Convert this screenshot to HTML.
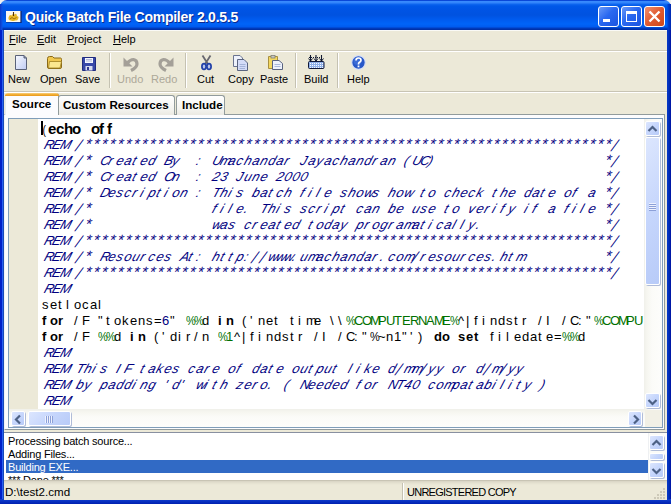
<!DOCTYPE html>
<html><head><meta charset="utf-8">
<style>
*{margin:0;padding:0;box-sizing:border-box}
html,body{width:671px;height:504px;overflow:hidden}
body{position:relative;background:#ece9d8;font-family:"Liberation Sans",sans-serif;font-size:11px;color:#000}
div,svg{position:absolute}
#code span{position:static}
#corner{left:0;top:0;width:671px;height:20px;background:#f0f0f0}
#title{left:0;top:0;width:671px;height:30px;border-radius:7px 7px 0 0;background:linear-gradient(#0a48d8 0px,#0a48d8 1px,#3a8cfe 1px,#3284fa 3px,#1068f0 4px,#0058e8 6px,#0054e4 10px,#0052e0 15px,#005cf0 20px,#0064f8 24px,#005cf0 26.5px,#0044cc 28px,#0030a8 29px,#0030a8 30px)}
#lb{left:0;top:30px;width:4px;height:474px;background:linear-gradient(90deg,#0020c8 0,#0020c8 2px,#2860f0 2px,#2860f0 3px,#1848b8 3px)}
#rb{left:667px;top:30px;width:4px;height:474px;background:linear-gradient(90deg,#0838c8,#0030b8 2px,#0010a0)}
#bb{left:0;top:499px;width:671px;height:5px;background:linear-gradient(#1040d0,#0020b0)}
.ttxt{left:25px;top:9px;font-weight:bold;font-size:14px;letter-spacing:-0.24px;line-height:16px;color:#fff;text-shadow:1px 1px 0 #0a2a90;white-space:pre}
.tbtn{top:6px;width:21px;height:21px;border:1px solid #fff;border-radius:3px;background:linear-gradient(135deg,#6a9af8,#2a68f0 45%,#1a54e0)}
.menu{font-size:11px;line-height:13px;white-space:pre;text-underline-offset:1px}
.hs{height:1px;left:4px;width:663px}
.tb{top:73px;font-size:11px;line-height:13px;white-space:pre}
.dis{color:#aca899}
.tsep{top:53px;width:2px;height:35px;border-left:1px solid #c5c2b2;border-right:1px solid #fff}
.tab{font-weight:bold;font-size:11.6px;line-height:14px;white-space:pre;border:1px solid #919b9c;border-bottom:none;border-radius:3px 3px 0 0;background:linear-gradient(#fff,#f3f3ef 70%,#ebeae3)}
#code{left:41px;top:121px;font-family:"Liberation Sans",sans-serif;font-size:13px;line-height:16px;white-space:pre;color:#000;width:620px;overflow:hidden}
#code p{height:16px;overflow:visible}
#code i{display:inline-block;width:8px;padding-left:1px;font-style:normal}
#code b{display:inline-block;font-weight:inherit;transform:scaleX(0.85);transform-origin:0 50%}
#code .c i{font-style:italic;padding-left:3.5px;transform:skewX(-18deg)}
#code s{display:inline-block;text-decoration:none}
#code .c s{transform:scale(1.1,1.22);transform-origin:50% 25%}
#code u{display:inline-block;text-decoration:none;transform:translateY(-2px) scale(1.15);transform-origin:50% 10%}
.c{color:#000080;font-style:italic}
.k{font-weight:bold}
.g{color:#007000}
.n{color:#000080}
.sbb{border:1px solid #fff;border-radius:2px;background:linear-gradient(135deg,#dce6fe,#c6d6fc 50%,#b8cbf8);box-shadow:1px 1px 0 #b0bcd8}
.list{font-size:11px;line-height:13px;white-space:pre;letter-spacing:-0.2px}
</style></head><body>
<div style="left:0;top:0;width:671px;height:10px;background:#eef0f2"></div>
<div id="title">
 <svg style="left:6px;top:11px" width="16" height="12"><rect x="0" y="0" width="15" height="11" fill="#fcf8f0"/><path d="M15 0V12H0" fill="none" stroke="#102060" stroke-width="1.2"/><path d="M2.5 6.5Q3.5 3 6 4.5Q6.5 1.5 8.5 3.5Q10.5 1.5 11 5Q13.5 5.5 12 8Q11.5 10 9 9.5Q7 10.5 5 9.5Q2 9.5 2.5 6.5Z" fill="#e8b828"/><path d="M7.5 1V5" stroke="#503010" stroke-width="1.1"/><path d="M4 8L6 6.5L8 8L10.5 6.5" stroke="#986808" fill="none" stroke-width="0.9"/></svg>
 <div class="ttxt">Quick Batch File Compiler 2.0.5.5</div>
 <div class="tbtn" style="left:598px"><div style="left:4px;top:12px;width:7px;height:3px;background:#fff"></div></div>
 <div class="tbtn" style="left:621px"><div style="left:4px;top:4px;width:11px;height:11px;border:1px solid #fff;border-top:3px solid #fff"></div></div>
 <div class="tbtn" style="left:644px;background:linear-gradient(135deg,#f09070,#e05a30 50%,#d04818)">
  <svg style="left:0;top:0" width="19" height="19"><path d="M4.5 4.5L14.5 14.5M14.5 4.5L4.5 14.5" stroke="#fff" stroke-width="2.4"/></svg>
 </div>
</div>
<div style="left:0;top:4px;width:3px;height:26px;background:linear-gradient(90deg,#0838c8,#1050e0 2px,transparent)"></div><div style="left:667px;top:4px;width:4px;height:26px;background:linear-gradient(90deg,transparent,#0040d0 1px,#0028b0)"></div>
<div id="lb"></div><div id="rb"></div><div id="bb"></div>
<!-- menu -->
<div class="hs" style="top:30px;background:#fafaf6"></div>
<div class="menu" style="left:9px;top:33px"><u>F</u>ile</div>
<div class="menu" style="left:37px;top:33px"><u>E</u>dit</div>
<div class="menu" style="left:67px;top:33px"><u>P</u>roject</div>
<div class="menu" style="left:113px;top:33px"><u>H</u>elp</div>
<div class="hs" style="top:50px;background:#d0ccbc"></div>
<div class="hs" style="top:51px;background:#fff"></div>
<!-- toolbar icons -->
<svg style="left:15px;top:55px" width="13" height="16"><defs><linearGradient id="gn" x1="0" y1="0" x2="1" y2="1"><stop offset="0" stop-color="#f8faff"/><stop offset="1" stop-color="#c0ccf4"/></linearGradient></defs><path d="M0.5 0.5H9L11.5 3V14.5H0.5Z" fill="url(#gn)" stroke="#5a6278"/><path d="M9 0.5V3H11.5" fill="#8890a8" stroke="#5a6278"/></svg>
<svg style="left:47px;top:56px" width="16" height="13"><path d="M0.5 2.5Q0.5 0.5 2.5 0.5H5.5L7 2H13.5Q14.5 2 14.5 3.5V11Q14.5 12.5 13 12.5H2Q0.5 12.5 0.5 11Z" fill="#f0c850" stroke="#8a6a18"/><path d="M2.5 5.5H14.5L13 12H1.5Z" fill="#fce890" stroke="#a08020" stroke-width="0.8"/></svg>
<svg style="left:82px;top:57px" width="14" height="14"><path d="M0.5 0.5H13.5V13.5H0.5Z" fill="#3848a8" stroke="#202c80"/><rect x="3" y="1" width="8" height="5" fill="#f4f6ff"/><path d="M4 2.5H10M4 4H10" stroke="#98a0c8" stroke-width="0.7"/><rect x="3.5" y="9" width="7" height="4.5" fill="#d8dcf0"/><rect x="5" y="10" width="2" height="3" fill="#303890"/></svg>
<svg style="left:123px;top:56px" width="17" height="16"><path d="M0.5 1.5V10.5H9.5Z" fill="#a4a098"/><path d="M4 7.5Q7 3.5 10.5 3.5Q14 4 14 8Q14 11.5 8 14.5" fill="none" stroke="#a4a098" stroke-width="3.2"/></svg>
<svg style="left:157px;top:56px" width="17" height="16"><g transform="translate(17,0) scale(-1,1)"><path d="M0.5 1.5V10.5H9.5Z" fill="#a4a098"/><path d="M4 7.5Q7 3.5 10.5 3.5Q14 4 14 8Q14 11.5 8 14.5" fill="none" stroke="#a4a098" stroke-width="3.2"/></g></svg>
<svg style="left:201px;top:55px" width="11" height="16"><path d="M1.5 0.5L7.5 10M9.5 0.5L3.5 10" stroke="#686870" stroke-width="1.8"/><ellipse cx="3" cy="11.6" rx="2.1" ry="2.9" fill="#b8c4e8" stroke="#2040a8" stroke-width="1.7"/><ellipse cx="8" cy="11.6" rx="2.1" ry="2.9" fill="#b8c4e8" stroke="#2040a8" stroke-width="1.7"/></svg>
<svg style="left:233px;top:55px" width="16" height="16"><path d="M0.5 0.5H7L9.5 3V11.5H0.5Z" fill="#eef2fc" stroke="#6a7490"/><path d="M4.5 4.5H11L14.5 8V15.5H4.5Z" fill="#d4dcf8" stroke="#5a6480"/><path d="M6.5 9.5H12.5M6.5 11.5H12.5M6.5 13.5H12" stroke="#98a8d0" stroke-width="0.8"/></svg>
<svg style="left:268px;top:55px" width="15" height="16"><path d="M0.5 1.5H9.5V13.5H0.5Z" fill="#f4d860" stroke="#a89040"/><rect x="3" y="0.5" width="4" height="2.5" fill="#c8c8c0" stroke="#808078" stroke-width="0.8"/><path d="M4.5 5.5H11L14.5 8.5V14.5H4.5Z" fill="#eef2fc" stroke="#5a6480"/><path d="M6.5 9.5H12.5M6.5 11.5H12.5" stroke="#98a8d0" stroke-width="0.8"/></svg>
<svg style="left:308px;top:55px" width="17" height="15"><path d="M2.5 0V6M8 0V6M13.5 0V6" stroke="#101830" stroke-width="1.1"/><path d="M0.5 3.5L2.5 6L4.5 3.5M6 3.5L8 6L10 3.5M11.5 3.5L13.5 6L15.5 3.5" stroke="#101830" fill="none" stroke-width="1"/><path d="M1 2.5H15" stroke="#101830" stroke-width="1" stroke-dasharray="1 1"/><rect x="0.5" y="6.5" width="15.5" height="7" rx="1" fill="#90b0e8" stroke="#101838"/><g fill="#f4f8ff"><rect x="2" y="8" width="1" height="1"/><rect x="4" y="8" width="1" height="1"/><rect x="6" y="8" width="1" height="1"/><rect x="8" y="8" width="1" height="1"/><rect x="10" y="8" width="1" height="1"/><rect x="12" y="8" width="1" height="1"/><rect x="14" y="8" width="1" height="1"/><rect x="2" y="10" width="1" height="1"/><rect x="4" y="10" width="1" height="1"/><rect x="6" y="10" width="1" height="1"/><rect x="8" y="10" width="1" height="1"/><rect x="10" y="10" width="1" height="1"/><rect x="12" y="10" width="1" height="1"/><rect x="14" y="10" width="1" height="1"/><rect x="2" y="12" width="1" height="1"/><rect x="4" y="12" width="1" height="1"/><rect x="6" y="12" width="1" height="1"/><rect x="8" y="12" width="1" height="1"/><rect x="10" y="12" width="1" height="1"/><rect x="12" y="12" width="1" height="1"/><rect x="14" y="12" width="1" height="1"/></g></svg>
<svg style="left:351px;top:55px" width="15" height="15"><circle cx="7.5" cy="7.5" r="6.8" fill="#2858c8" stroke="#d8e0f4" stroke-width="1.2"/><circle cx="6.5" cy="6" r="4" fill="#4878e0" opacity="0.6"/><path d="M5 5.5Q5 3 7.5 3Q10 3 10 5.3Q10 6.7 8.2 7.5Q7.5 8 7.5 9.5" fill="none" stroke="#fff" stroke-width="1.7"/><rect x="6.6" y="10.5" width="1.8" height="1.8" fill="#fff"/></svg>

<!-- toolbar text -->
<div class="tb" style="left:8px">New</div>
<div class="tb" style="left:40px">Open</div>
<div class="tb" style="left:75px">Save</div>
<div class="tsep" style="left:109px"></div>
<div class="tb dis" style="left:117px">Undo</div>
<div class="tb dis" style="left:151px">Redo</div>
<div class="tsep" style="left:185px"></div>
<div class="tb" style="left:197px">Cut</div>
<div class="tb" style="left:228px">Copy</div>
<div class="tb" style="left:260px">Paste</div>
<div class="tsep" style="left:295px"></div>
<div class="tb" style="left:304px">Build</div>
<div class="tsep" style="left:337px"></div>
<div class="tb" style="left:347px">Help</div>
<div class="hs" style="top:91px;background:#c8c4b4"></div>
<div class="hs" style="top:92px;background:#fff"></div>
<!-- tab panel -->
<div style="left:4px;top:114px;width:661px;height:316px;background:#fcfcfe;border:1px solid #919b9c;border-left-color:#f0f2f4"></div>
<div class="tab" style="left:58px;top:95px;width:117px;height:20px;padding:2px 0 0 4px">Custom Resources</div>
<div class="tab" style="left:176px;top:95px;width:49px;height:20px;padding:2px 0 0 5px">Include</div>
<div class="tab" style="left:5px;top:93px;width:54px;height:22px;padding:4px 0 0 6px;background:#fcfcfe;border-top:none;border-left-color:#e8ecf0">Source</div>
<div style="left:5px;top:93px;width:54px;height:3px;background:linear-gradient(#f8d080,#f0a828 60%,#e89820);border-radius:3px 3px 0 0"></div>
<!-- editor -->
<div style="left:8px;top:118px;width:655px;height:310px;background:#fff;border:1px solid #7f9db9"></div>
<div style="left:9px;top:119px;width:29px;height:291px;background:#ece9d8"></div>
<div id="code" style="height:291px"><p><span class="k"><i style="font-weight:normal;transform:scaleX(0.8)">(</i></span><span class="k" style="position:relative;left:-2px;font-size:15px"><i>e</i><i>c</i><i>h</i><i>o</i></span><span class="k" style="position:relative;left:1px;font-size:15px"><i> </i><i>o</i><i>f</i><i>f</i></span></p><p><span class="c"><i>R</i><i>E</i><i>M</i><i> </i><i><s>/</s></i><i><u>*</u></i><i><u>*</u></i><i><u>*</u></i><i><u>*</u></i><i><u>*</u></i><i><u>*</u></i><i><u>*</u></i><i><u>*</u></i><i><u>*</u></i><i><u>*</u></i><i><u>*</u></i><i><u>*</u></i><i><u>*</u></i><i><u>*</u></i><i><u>*</u></i><i><u>*</u></i><i><u>*</u></i><i><u>*</u></i><i><u>*</u></i><i><u>*</u></i><i><u>*</u></i><i><u>*</u></i><i><u>*</u></i><i><u>*</u></i><i><u>*</u></i><i><u>*</u></i><i><u>*</u></i><i><u>*</u></i><i><u>*</u></i><i><u>*</u></i><i><u>*</u></i><i><u>*</u></i><i><u>*</u></i><i><u>*</u></i><i><u>*</u></i><i><u>*</u></i><i><u>*</u></i><i><u>*</u></i><i><u>*</u></i><i><u>*</u></i><i><u>*</u></i><i><u>*</u></i><i><u>*</u></i><i><u>*</u></i><i><u>*</u></i><i><u>*</u></i><i><u>*</u></i><i><u>*</u></i><i><u>*</u></i><i><u>*</u></i><i><u>*</u></i><i><u>*</u></i><i><u>*</u></i><i><u>*</u></i><i><u>*</u></i><i><u>*</u></i><i><u>*</u></i><i><u>*</u></i><i><u>*</u></i><i><u>*</u></i><i><u>*</u></i><i><u>*</u></i><i><u>*</u></i><i><u>*</u></i><i><u>*</u></i><i><u>*</u></i><i><s>/</s></i></span></p><p><span class="c"><i>R</i><i>E</i><i>M</i><i> </i><i><s>/</s></i><i><u>*</u></i><i> </i><i>C</i><i>r</i><i>e</i><i>a</i><i>t</i><i>e</i><i>d</i><i> </i><i>B</i><i>y</i><i> </i><i> </i><i>:</i><i> </i><i>U</i><i>m</i><i>a</i><i>c</i><i>h</i><i>a</i><i>n</i><i>d</i><i>a</i><i>r</i><i> </i><i>J</i><i>a</i><i>y</i><i>a</i><i>c</i><i>h</i><i>a</i><i>n</i><i>d</i><i>r</i><i>a</i><i>n</i><i> </i><i>(</i><i>U</i><i>C</i><i>)</i><i> </i><i> </i><i> </i><i> </i><i> </i><i> </i><i> </i><i> </i><i> </i><i> </i><i> </i><i> </i><i> </i><i> </i><i> </i><i> </i><i> </i><i> </i><i> </i><i> </i><i> </i><i><u>*</u></i><i><s>/</s></i></span></p><p><span class="c"><i>R</i><i>E</i><i>M</i><i> </i><i><s>/</s></i><i><u>*</u></i><i> </i><i>C</i><i>r</i><i>e</i><i>a</i><i>t</i><i>e</i><i>d</i><i> </i><i>O</i><i>n</i><i> </i><i> </i><i>:</i><i> </i><i>2</i><i>3</i><i> </i><i>J</i><i>u</i><i>n</i><i>e</i><i> </i><i>2</i><i>0</i><i>0</i><i>0</i><i> </i><i> </i><i> </i><i> </i><i> </i><i> </i><i> </i><i> </i><i> </i><i> </i><i> </i><i> </i><i> </i><i> </i><i> </i><i> </i><i> </i><i> </i><i> </i><i> </i><i> </i><i> </i><i> </i><i> </i><i> </i><i> </i><i> </i><i> </i><i> </i><i> </i><i> </i><i> </i><i> </i><i> </i><i> </i><i> </i><i> </i><i><u>*</u></i><i><s>/</s></i></span></p><p><span class="c"><i>R</i><i>E</i><i>M</i><i> </i><i><s>/</s></i><i><u>*</u></i><i> </i><i>D</i><i>e</i><i>s</i><i>c</i><i>r</i><i>i</i><i>p</i><i>t</i><i>i</i><i>o</i><i>n</i><i> </i><i>:</i><i> </i><i>T</i><i>h</i><i>i</i><i>s</i><i> </i><i>b</i><i>a</i><i>t</i><i>c</i><i>h</i><i> </i><i>f</i><i>i</i><i>l</i><i>e</i><i> </i><i>s</i><i>h</i><i>o</i><i>w</i><i>s</i><i> </i><i>h</i><i>o</i><i>w</i><i> </i><i>t</i><i>o</i><i> </i><i>c</i><i>h</i><i>e</i><i>c</i><i>k</i><i> </i><i>t</i><i>h</i><i>e</i><i> </i><i>d</i><i>a</i><i>t</i><i>e</i><i> </i><i>o</i><i>f</i><i> </i><i>a</i><i> </i><i><u>*</u></i><i><s>/</s></i></span></p><p><span class="c"><i>R</i><i>E</i><i>M</i><i> </i><i><s>/</s></i><i><u>*</u></i><i> </i><i> </i><i> </i><i> </i><i> </i><i> </i><i> </i><i> </i><i> </i><i> </i><i> </i><i> </i><i> </i><i> </i><i> </i><i>f</i><i>i</i><i>l</i><i>e</i><i>.</i><i> </i><i>T</i><i>h</i><i>i</i><i>s</i><i> </i><i>s</i><i>c</i><i>r</i><i>i</i><i>p</i><i>t</i><i> </i><i>c</i><i>a</i><i>n</i><i> </i><i>b</i><i>e</i><i> </i><i>u</i><i>s</i><i>e</i><i> </i><i>t</i><i>o</i><i> </i><i>v</i><i>e</i><i>r</i><i>i</i><i>f</i><i>y</i><i> </i><i>i</i><i>f</i><i> </i><i>a</i><i> </i><i>f</i><i>i</i><i>l</i><i>e</i><i> </i><i><u>*</u></i><i><s>/</s></i></span></p><p><span class="c"><i>R</i><i>E</i><i>M</i><i> </i><i><s>/</s></i><i><u>*</u></i><i> </i><i> </i><i> </i><i> </i><i> </i><i> </i><i> </i><i> </i><i> </i><i> </i><i> </i><i> </i><i> </i><i> </i><i> </i><i>w</i><i>a</i><i>s</i><i> </i><i>c</i><i>r</i><i>e</i><i>a</i><i>t</i><i>e</i><i>d</i><i> </i><i>t</i><i>o</i><i>d</i><i>a</i><i>y</i><i> </i><i>p</i><i>r</i><i>o</i><i>g</i><i>r</i><i>a</i><i>m</i><i>a</i><i>t</i><i>i</i><i>c</i><i>a</i><i>l</i><i>l</i><i>y</i><i>.</i><i> </i><i> </i><i> </i><i> </i><i> </i><i> </i><i> </i><i> </i><i> </i><i> </i><i> </i><i> </i><i> </i><i> </i><i> </i><i><u>*</u></i><i><s>/</s></i></span></p><p><span class="c"><i>R</i><i>E</i><i>M</i><i> </i><i><s>/</s></i><i><u>*</u></i><i><u>*</u></i><i><u>*</u></i><i><u>*</u></i><i><u>*</u></i><i><u>*</u></i><i><u>*</u></i><i><u>*</u></i><i><u>*</u></i><i><u>*</u></i><i><u>*</u></i><i><u>*</u></i><i><u>*</u></i><i><u>*</u></i><i><u>*</u></i><i><u>*</u></i><i><u>*</u></i><i><u>*</u></i><i><u>*</u></i><i><u>*</u></i><i><u>*</u></i><i><u>*</u></i><i><u>*</u></i><i><u>*</u></i><i><u>*</u></i><i><u>*</u></i><i><u>*</u></i><i><u>*</u></i><i><u>*</u></i><i><u>*</u></i><i><u>*</u></i><i><u>*</u></i><i><u>*</u></i><i><u>*</u></i><i><u>*</u></i><i><u>*</u></i><i><u>*</u></i><i><u>*</u></i><i><u>*</u></i><i><u>*</u></i><i><u>*</u></i><i><u>*</u></i><i><u>*</u></i><i><u>*</u></i><i><u>*</u></i><i><u>*</u></i><i><u>*</u></i><i><u>*</u></i><i><u>*</u></i><i><u>*</u></i><i><u>*</u></i><i><u>*</u></i><i><u>*</u></i><i><u>*</u></i><i><u>*</u></i><i><u>*</u></i><i><u>*</u></i><i><u>*</u></i><i><u>*</u></i><i><u>*</u></i><i><u>*</u></i><i><u>*</u></i><i><u>*</u></i><i><u>*</u></i><i><u>*</u></i><i><u>*</u></i><i><s>/</s></i></span></p><p><span class="c"><i>R</i><i>E</i><i>M</i><i> </i><i><s>/</s></i><i><u>*</u></i><i> </i><i>R</i><i>e</i><i>s</i><i>o</i><i>u</i><i>r</i><i>c</i><i>e</i><i>s</i><i> </i><i>A</i><i>t</i><i>:</i><i> </i><i>h</i><i>t</i><i>t</i><i>p</i><i>:</i><i><s>/</s></i><i><s>/</s></i><i>w</i><i>w</i><i>w</i><i>.</i><i>u</i><i>m</i><i>a</i><i>c</i><i>h</i><i>a</i><i>n</i><i>d</i><i>a</i><i>r</i><i>.</i><i>c</i><i>o</i><i>m</i><i><s>/</s></i><i>r</i><i>e</i><i>s</i><i>o</i><i>u</i><i>r</i><i>c</i><i>e</i><i>s</i><i>.</i><i>h</i><i>t</i><i>m</i><i> </i><i> </i><i> </i><i> </i><i> </i><i> </i><i> </i><i> </i><i> </i><i> </i><i><u>*</u></i><i><s>/</s></i></span></p><p><span class="c"><i>R</i><i>E</i><i>M</i><i> </i><i><s>/</s></i><i><u>*</u></i><i><u>*</u></i><i><u>*</u></i><i><u>*</u></i><i><u>*</u></i><i><u>*</u></i><i><u>*</u></i><i><u>*</u></i><i><u>*</u></i><i><u>*</u></i><i><u>*</u></i><i><u>*</u></i><i><u>*</u></i><i><u>*</u></i><i><u>*</u></i><i><u>*</u></i><i><u>*</u></i><i><u>*</u></i><i><u>*</u></i><i><u>*</u></i><i><u>*</u></i><i><u>*</u></i><i><u>*</u></i><i><u>*</u></i><i><u>*</u></i><i><u>*</u></i><i><u>*</u></i><i><u>*</u></i><i><u>*</u></i><i><u>*</u></i><i><u>*</u></i><i><u>*</u></i><i><u>*</u></i><i><u>*</u></i><i><u>*</u></i><i><u>*</u></i><i><u>*</u></i><i><u>*</u></i><i><u>*</u></i><i><u>*</u></i><i><u>*</u></i><i><u>*</u></i><i><u>*</u></i><i><u>*</u></i><i><u>*</u></i><i><u>*</u></i><i><u>*</u></i><i><u>*</u></i><i><u>*</u></i><i><u>*</u></i><i><u>*</u></i><i><u>*</u></i><i><u>*</u></i><i><u>*</u></i><i><u>*</u></i><i><u>*</u></i><i><u>*</u></i><i><u>*</u></i><i><u>*</u></i><i><u>*</u></i><i><u>*</u></i><i><u>*</u></i><i><u>*</u></i><i><u>*</u></i><i><u>*</u></i><i><u>*</u></i><i><s>/</s></i></span></p><p><span class="c"><i>R</i><i>E</i><i>M</i></span></p><p><i>s</i><i>e</i><i>t</i><i>l</i><i>o</i><i>c</i><i>a</i><i>l</i></p><p><span class="k"><i>f</i><i>o</i><i>r</i></span><i> </i><i><s>/</s></i><i>F</i><i> </i><i>"</i><i>t</i><i>o</i><i>k</i><i>e</i><i>n</i><i>s</i><i>=</i><span class="n"><i>6</i></span><i>"</i><i> </i><span class="g"><i><b>%</b></i><i><b>%</b></i></span><i>d</i><i> </i><span class="k"><i>i</i><i>n</i></span><i> </i><i>(</i><i>'</i><i>n</i><i>e</i><i>t</i><i> </i><i>t</i><i>i</i><i>m</i><i>e</i><i> </i><i>\</i><i>\</i><span class="g"><i><b>%</b></i><i>C</i><i>O</i><i>M</i><i>P</i><i>U</i><i>T</i><i>E</i><i>R</i><i>N</i><i>A</i><i>M</i><i>E</i><i><b>%</b></i></span><i>^</i><i>|</i><i>f</i><i>i</i><i>n</i><i>d</i><i>s</i><i>t</i><i>r</i><i> </i><i><s>/</s></i><i>I</i><i> </i><i><s>/</s></i><i>C</i><i>:</i><i>"</i><span class="g"><i><b>%</b></i><i>C</i><i>O</i><i>M</i><i>P</i><i>U</i></span></p><p><span class="k"><i>f</i><i>o</i><i>r</i></span><i> </i><i><s>/</s></i><i>F</i><i> </i><span class="g"><i><b>%</b></i><i><b>%</b></i></span><i>d</i><i> </i><span class="k"><i>i</i><i>n</i></span><i> </i><i>(</i><i>'</i><i>d</i><i>i</i><i>r</i><i><s>/</s></i><i>n</i><i> </i><span class="g"><i><b>%</b></i><i>1</i></span><i>^</i><i>|</i><i>f</i><i>i</i><i>n</i><i>d</i><i>s</i><i>t</i><i>r</i><i> </i><i><s>/</s></i><i>I</i><i> </i><i><s>/</s></i><i>C</i><i>:</i><i>"</i><i><b>%</b></i><i>~</i><i>n</i><i>1</i><i>"</i><i>'</i><i>)</i><i> </i><span class="k"><i>d</i><i>o</i><i> </i><i>s</i><i>e</i><i>t</i></span><i> </i><i>f</i><i>i</i><i>l</i><i>e</i><i>d</i><i>a</i><i>t</i><i>e</i><i>=</i><span class="g"><i><b>%</b></i><i><b>%</b></i></span><i>d</i></p><p><span class="c"><i>R</i><i>E</i><i>M</i></span></p><p><span class="c"><i>R</i><i>E</i><i>M</i><i> </i><i>T</i><i>h</i><i>i</i><i>s</i><i> </i><i>I</i><i>F</i><i> </i><i>t</i><i>a</i><i>k</i><i>e</i><i>s</i><i> </i><i>c</i><i>a</i><i>r</i><i>e</i><i> </i><i>o</i><i>f</i><i> </i><i>d</i><i>a</i><i>t</i><i>e</i><i> </i><i>o</i><i>u</i><i>t</i><i>p</i><i>u</i><i>t</i><i> </i><i>l</i><i>i</i><i>k</i><i>e</i><i> </i><i>d</i><i><s>/</s></i><i>m</i><i>m</i><i><s>/</s></i><i>y</i><i>y</i><i> </i><i>o</i><i>r</i><i> </i><i>d</i><i><s>/</s></i><i>m</i><i><s>/</s></i><i>y</i><i>y</i></span></p><p><span class="c"><i>R</i><i>E</i><i>M</i><i> </i><i>b</i><i>y</i><i> </i><i>p</i><i>a</i><i>d</i><i>d</i><i>i</i><i>n</i><i>g</i><i> </i><i>'</i><i>d</i><i>'</i><i> </i><i>w</i><i>i</i><i>t</i><i>h</i><i> </i><i>z</i><i>e</i><i>r</i><i>o</i><i>.</i><i> </i><i>(</i><i> </i><i>N</i><i>e</i><i>e</i><i>d</i><i>e</i><i>d</i><i> </i><i>f</i><i>o</i><i>r</i><i> </i><i>N</i><i>T</i><i>4</i><i>0</i><i> </i><i>c</i><i>o</i><i>m</i><i>p</i><i>a</i><i>t</i><i>a</i><i>b</i><i>i</i><i>l</i><i>i</i><i>t</i><i>y</i><i> </i><i>)</i></span></p><p><span class="c"><i>R</i><i>E</i><i>M</i></span></p></div>
<div style="left:41px;top:121px;width:2px;height:14px;background:#000"></div>
<!-- editor scrollbars -->
<div style="left:644px;top:119px;width:18px;height:291px;background:linear-gradient(90deg,#f0f0ea,#f6f6f0 3px,#fbfbf8 8px,#fdfdfb)"></div>
<div class="sbb" style="left:645px;top:121px;width:15px;height:15px"><svg style="left:1px;top:3px" width="11" height="8"><path d="M1.5 6L5.5 2L9.5 6" fill="none" stroke="#4d6185" stroke-width="2.2"/></svg></div>
<div class="sbb" style="left:645px;top:137px;width:15px;height:148px"><svg style="left:2px;top:64px" width="9" height="9"><path d="M1 1.5H8M1 3.5H8M1 5.5H8M1 7.5H8" stroke="#eef2fe" stroke-width="1"/><path d="M1 2.5H8M1 4.5H8M1 6.5H8M1 8.5H8" stroke="#8ca0d8" stroke-width="1"/></svg></div>
<div class="sbb" style="left:645px;top:393px;width:15px;height:15px"><svg style="left:1px;top:4px" width="11" height="8"><path d="M1.5 2L5.5 6L9.5 2" fill="none" stroke="#4d6185" stroke-width="2.2"/></svg></div>
<div style="left:9px;top:409px;width:636px;height:18px;background:linear-gradient(#f0f0ea,#f6f6f0 3px,#fbfbf8 8px,#fdfdfb)"></div>
<div class="sbb" style="left:11px;top:411px;width:14px;height:15px"><svg style="left:2px;top:2px" width="8" height="11"><path d="M6 1.5L2 5.5L6 9.5" fill="none" stroke="#4d6185" stroke-width="2.2"/></svg></div>
<div class="sbb" style="left:28px;top:411px;width:43px;height:15px"><svg style="left:15px;top:3px" width="9" height="9"><path d="M1.5 1V8M3.5 1V8M5.5 1V8M7.5 1V8" stroke="#eef2fe" stroke-width="1"/><path d="M2.5 1V8M4.5 1V8M6.5 1V8M8.5 1V8" stroke="#8ca0d8" stroke-width="1"/></svg></div>
<div class="sbb" style="left:628px;top:411px;width:14px;height:15px"><svg style="left:3px;top:2px" width="8" height="11"><path d="M2 1.5L6 5.5L2 9.5" fill="none" stroke="#4d6185" stroke-width="2.2"/></svg></div>
<div style="left:645px;top:410px;width:17px;height:17px;background:#f2f0e6"></div>
<!-- listbox -->
<div style="left:4px;top:432px;width:663px;height:48px;background:#fff;border-top:1px solid #8890a0"></div>
<div class="list" style="left:8px;top:435px">Processing batch source...</div>
<div class="list" style="left:8px;top:448px">Adding Files...</div>
<div style="left:6px;top:460px;width:643px;height:13px;background:#316ac5"></div>
<div class="list" style="left:8px;top:461px;color:#fff">Building EXE...</div>
<div class="list" style="left:8px;top:474px">*** Done ***</div>
<div style="left:648px;top:433px;width:19px;height:47px;background:#fbfbf8;border-left:1px solid #eef0f2"></div>
<div class="sbb" style="left:649px;top:435px;width:15px;height:15px"><svg style="left:1px;top:3px" width="11" height="8"><path d="M1.5 6L5.5 2L9.5 6" fill="none" stroke="#4d6185" stroke-width="2.2"/></svg></div>
<div class="sbb" style="left:649px;top:453px;width:15px;height:7px"></div>
<div class="sbb" style="left:649px;top:462px;width:15px;height:16px"><svg style="left:1px;top:4px" width="11" height="8"><path d="M1.5 2L5.5 6L9.5 2" fill="none" stroke="#4d6185" stroke-width="2.2"/></svg></div>
<!-- status -->
<div style="left:4px;top:480px;width:663px;height:20px;background:linear-gradient(#b8b4a4,#d8d4c4 1px,#e4e1d0 3px,#ece9d8 5px)"></div>
<div class="list" style="left:5px;top:485px;font-size:11.6px;letter-spacing:0">D:\test2.cmd</div>
<div style="left:402px;top:483px;width:2px;height:17px;border-left:1px solid #c5c2b2;border-right:1px solid #fff"></div>
<div class="list" style="left:407px;top:486px;letter-spacing:-0.75px">UNREGISTERED COPY</div>
<svg style="left:654px;top:488px" width="12" height="12"><g fill="#cdc9b8"><rect x="9" y="0" width="2" height="2"/><rect x="6" y="3" width="2" height="2"/><rect x="9" y="3" width="2" height="2"/><rect x="3" y="6" width="2" height="2"/><rect x="6" y="6" width="2" height="2"/><rect x="9" y="6" width="2" height="2"/><rect x="0" y="9" width="2" height="2"/><rect x="3" y="9" width="2" height="2"/><rect x="6" y="9" width="2" height="2"/><rect x="9" y="9" width="2" height="2"/></g></svg>
</body></html>
